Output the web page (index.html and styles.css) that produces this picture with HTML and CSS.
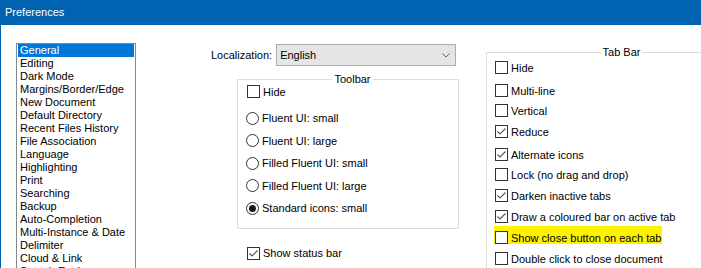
FILE: index.html
```html
<!DOCTYPE html>
<html lang="en">
<head>
  <meta charset="UTF-8">
  <meta name="viewport" content="width=device-width, initial-scale=1.0">
  <title>Preferences</title>
  <link rel="stylesheet" href="styles.css">
</head>
<body>
  <div class="window">
    <div class="titlebar">Preferences</div>
    <div class="content">
      <ul class="pages">
        <li class="selected">General</li>
        <li>Editing</li>
        <li>Dark Mode</li>
        <li>Margins/Border/Edge</li>
        <li>New Document</li>
        <li>Default Directory</li>
        <li>Recent Files History</li>
        <li>File Association</li>
        <li>Language</li>
        <li>Highlighting</li>
        <li>Print</li>
        <li>Searching</li>
        <li>Backup</li>
        <li>Auto-Completion</li>
        <li>Multi-Instance &amp; Date</li>
        <li>Delimiter</li>
        <li>Cloud &amp; Link</li>
        <li>Search Engine</li>
        <li>MISC.</li>
      </ul>

      <div class="middle">
        <div class="loc-row">
          <label>Localization:</label>
          <div class="dropdown">
            <span>English</span>
            <svg width="8" height="5" viewBox="0 0 8 5"><polyline points="0.5,0.5 4,4 7.5,0.5" fill="none" stroke="#606060" stroke-width="1"/></svg>
          </div>
        </div>

        <fieldset class="group toolbar-group">
          <legend>Toolbar</legend>
          <div class="check"><span class="box"></span>Hide</div>
          <div class="radios">
            <div class="radio"><span class="dot"></span>Fluent UI: small</div>
            <div class="radio"><span class="dot"></span>Fluent UI: large</div>
            <div class="radio"><span class="dot"></span>Filled Fluent UI: small</div>
            <div class="radio"><span class="dot"></span>Filled Fluent UI: large</div>
            <div class="radio"><span class="dot on"></span>Standard icons: small</div>
          </div>
        </fieldset>

        <div class="check status">
          <span class="box"><svg viewBox="0 0 11 11"><polyline points="1.5,5.5 4,8 9.5,2.5"/></svg></span>Show status bar
        </div>
      </div>

      <fieldset class="group tabbar-group">
        <legend>Tab Bar</legend>
        <div class="check mt3"><span class="box"></span>Hide</div>
        <div class="check mt10"><span class="box"></span>Multi-line</div>
        <div class="check mt7"><span class="box"></span>Vertical</div>
        <div class="check"><span class="box"><svg viewBox="0 0 11 11"><polyline points="1.5,5.5 4,8 9.5,2.5"/></svg></span>Reduce</div>
        <div class="check mt10"><span class="box"><svg viewBox="0 0 11 11"><polyline points="1.5,5.5 4,8 9.5,2.5"/></svg></span>Alternate icons</div>
        <div class="check mt7"><span class="box"></span>Lock (no drag and drop)</div>
        <div class="check"><span class="box"><svg viewBox="0 0 11 11"><polyline points="1.5,5.5 4,8 9.5,2.5"/></svg></span>Darken inactive tabs</div>
        <div class="check"><span class="box"><svg viewBox="0 0 11 11"><polyline points="1.5,5.5 4,8 9.5,2.5"/></svg></span>Draw a coloured bar on active tab</div>
        <div class="check marked"><span class="box"></span>Show close button on each tab</div>
        <div class="check"><span class="box"></span>Double click to close document</div>
      </fieldset>
    </div>
  </div>
</body>
</html>
```

FILE: styles.css
```css
body {
  margin: 0;
  font-family: "Liberation Sans", Arial, sans-serif;
  font-size: 11px;
  color: #000;
  background: #fff;
}

.window {
  width: 700px;
  height: 268px;
  border-left: 1px solid #0063b1;
  overflow: hidden;
}

.titlebar {
  height: 25px;
  line-height: 25px;
  padding-left: 4px;
  background: #0063b1;
  color: #fff;
}

.content {
  display: flex;
  align-items: flex-start;
}

/* left list of pages */
.pages {
  list-style: none;
  margin: 18px 0 0 15px;
  padding: 0 1px;
  width: 120px;
  height: 260px;
  box-sizing: border-box;
  border: 1px solid #828790;
  flex-shrink: 0;
}

.pages li {
  height: 13px;
  line-height: 13px;
  padding-left: 2px;
  white-space: nowrap;
}

.pages li.selected {
  background: #0078d7;
  color: #fff;
}

/* middle column */
.middle {
  margin-left: 75px;
  width: 248px;
  flex-shrink: 0;
}

.loc-row {
  display: flex;
  align-items: center;
  margin-top: 19px;
  height: 22px;
}

.dropdown {
  display: flex;
  align-items: center;
  justify-content: space-between;
  margin-left: 4px;
  width: 180px;
  height: 22px;
  box-sizing: border-box;
  padding: 0 5px 0 3px;
  background: #e5e5e5;
  border: 1px solid #adadad;
}

/* group boxes */
.group {
  margin: 0;
  padding: 0 0 0 8px;
  min-width: 0;
  border: 1px solid #dcdcdc;
  box-sizing: border-box;
}

.group legend {
  margin: 0 auto;
  padding: 0 2px;
  line-height: 12px;
}

.toolbar-group {
  margin: 7px 0 0 26px;
  padding: 0 0 8px 9px;
  width: 222px;
}

.tabbar-group {
  margin: 21px 0 0 27px;
  width: 263px;
  height: 260px;
  flex-shrink: 0;
}

/* checkboxes and radios */
.check, .radio {
  display: flex;
  align-items: center;
  gap: 3px;
  height: 13px;
  white-space: nowrap;
}

.tabbar-group .check {
  margin-top: 8px;
}

.tabbar-group .mt3 { margin-top: 3px; }
.tabbar-group .mt7 { margin-top: 7px; }
.tabbar-group .mt10 { margin-top: 10px; }

.tabbar-group .marked {
  margin: 3px 0 0 -1px;
  padding: 5px 1px 0 1px;
  width: fit-content;
  background: #fff200;
}

.box {
  width: 13px;
  height: 13px;
  box-sizing: border-box;
  border: 1px solid #333;
  background: #fff;
  flex-shrink: 0;
}

.box svg {
  display: block;
  width: 11px;
  height: 11px;
  fill: none;
  stroke: #555;
  stroke-width: 1.1;
}

.radios {
  margin-top: 9px;
}

.radio {
  height: 22.5px;
  margin-left: -1px;
}

.dot {
  display: flex;
  align-items: center;
  justify-content: center;
  width: 13px;
  height: 13px;
  box-sizing: border-box;
  border: 1px solid #333;
  border-radius: 50%;
  background: #fff;
  flex-shrink: 0;
}

.dot.on::after {
  content: "";
  width: 7px;
  height: 7px;
  border-radius: 50%;
  background: #1a1a1a;
}

.status {
  margin: 18px 0 0 36px;
}
```
